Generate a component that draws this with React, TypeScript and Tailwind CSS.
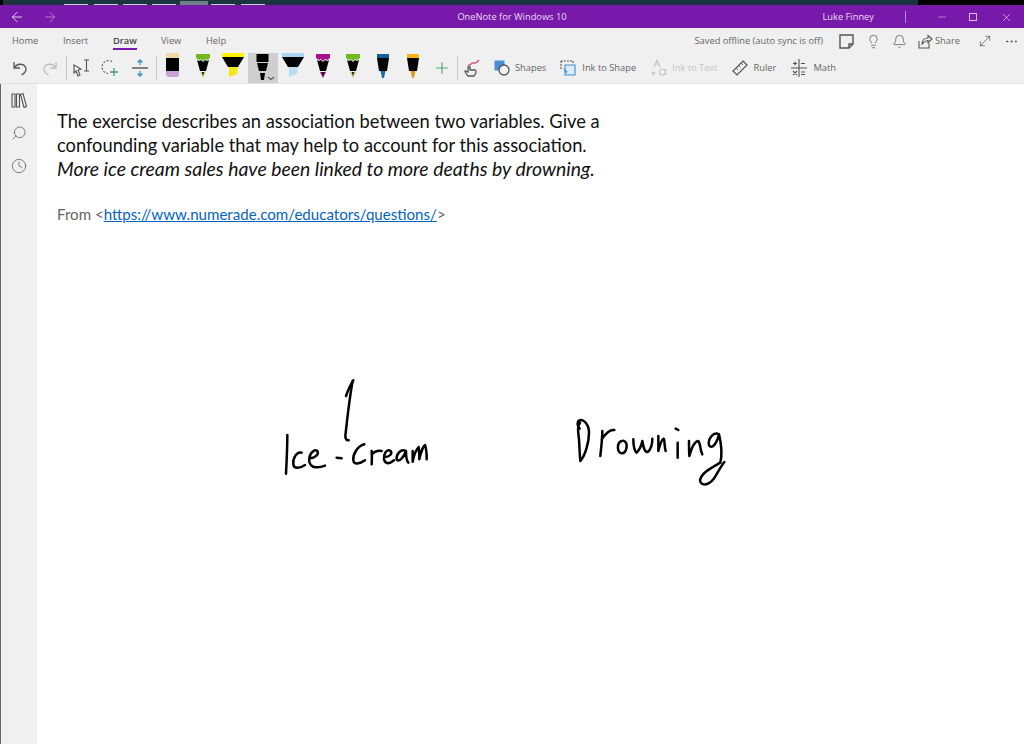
import { ArrowLeft, ArrowRight, Bell, Clock, Lightbulb, Minus, MoreHorizontal, MoveDiagonal, Plus, Search, X } from 'lucide-react';

const ui = "font-['Open_Sans','Noto_Sans',sans-serif]";

// ---- ribbon pens ----
function FeltPen({ top, tip }: { top: string; tip: string }) {
  return (
    <svg width="30" height="31" viewBox="0 1 30 31">
      <path d="M8 2h14v4l-3 2-2-1-2 2-2-2-2 1-3-2z" fill={top} />
      <path d="M9 8l2 1 2-1 2 2 2-2 2 1 2-1-3 11h-6z" fill="#000" />
      <path d="M12 20h6l-3 6z" fill={tip} />
      <path d="M14 20h2l-1 4z" fill="#000" />
    </svg>
  );
}

function BallPen({ top, tip }: { top: string; tip: string }) {
  return (
    <svg width="30" height="31" viewBox="0 1 30 31">
      <path d="M9 2h12v4H9z" fill={top} />
      <path d="M9 6h12l-2 13h-8z" fill="#000" />
      <path d="M12.500 19h5l-1.500 7h-2z" fill={tip} />
    </svg>
  );
}

function Highlighter({ top, tip }: { top: string; tip: string }) {
  return (
    <svg width="30" height="31" viewBox="0 1 30 31">
      <path d="M4 1h22v5H4z" fill={top} />
      <path d="M4 5h22l-6 10H10z" fill="#000" />
      <path d="M11 15h9l-1 7-8 3z" fill={tip} />
    </svg>
  );
}

function PenStrip() {
  return (
    <>
      <div className="w-[30px] h-[30px]">
        <svg width="30" height="31" viewBox="0 1 30 31">
          <path d="M8 1h13v5H8z" fill="#f6d7a8" />
          <path d="M8 6h13v13H8z" fill="#000" />
          <path d="M8 19h13v3q0 3-3 3h-7q-3 0-3-3z" fill="#c9a0d8" />
        </svg>
      </div>
      <div className="w-[30px] h-[30px]"><FeltPen top="#70b81c" tip="#d6d07a" /></div>
      <div className="w-[30px] h-[30px]"><Highlighter top="#fff200" tip="#f5e616" /></div>
      <div className="w-[30px] h-[30px] bg-[#cfcfcf] relative">
        <svg width="30" height="30" viewBox="0 1 30 30">
          <path d="M8.500 2h12v8h-12z" fill="#000" />
          <path d="M9 11h11l-2 8h-7z" fill="#000" />
          <path d="M12 21h5l-1 7h-3z" fill="#000" />
          <path d="M20 25l3 2.500 3-2.500" fill="none" stroke="#555" strokeWidth="1.200" />
        </svg>
      </div>
      <div className="w-[30px] h-[30px]"><Highlighter top="#a9d5f2" tip="#bcdcf3" /></div>
      <div className="w-[30px] h-[30px]"><FeltPen top="#a8108c" tip="#8c1478" /></div>
      <div className="w-[30px] h-[30px]"><FeltPen top="#70b81c" tip="#c2c27a" /></div>
      <div className="w-[30px] h-[30px]"><BallPen top="#0f5c9e" tip="#1a6aa8" /></div>
      <div className="w-[30px] h-[30px]"><BallPen top="#f7b21a" tip="#d9a022" /></div>
    </>
  );
}

// ---- ribbon icons ----
function UndoIcon({ color }: { color: string }) {
  return (
    <svg width="18" height="18" viewBox="0 0 18 18" fill="none" stroke={color} strokeWidth="1.300">
      <path d="M3 3v6h6" />
      <path d="M3.500 8.500C6 4.500 12 4 14.500 8c1.500 3-.5 6-4 8" />
    </svg>
  );
}

function SelectIcon() {
  return (
    <svg width="20" height="20" viewBox="0 0 20 20" fill="none" stroke="#555" strokeWidth="1.100">
      <path d="M3 7l7 4-3 1 2 5-2 1-2-5-2 2z" />
      <path d="M13 2h5M13 13h5M15.500 2v11" />
    </svg>
  );
}

function LassoIcon() {
  return (
    <svg width="20" height="20" viewBox="0 0 20 20" fill="none">
      <path d="M12 3.500A6.500 6.500 0 1 0 8 15.500" stroke="#666" strokeWidth="1.200" strokeDasharray="2 1.600" />
      <path d="M14 10v8M10 14h8" stroke="#3f9e78" strokeWidth="1.300" />
    </svg>
  );
}

function SpaceIcon() {
  return (
    <svg width="18" height="20" viewBox="0 0 18 20" fill="none">
      <path d="M1 10h16" stroke="#666" strokeWidth="1.600" />
      <path d="M9 2v5M6.500 4.500L9 2l2.500 2.500M9 18v-5M6.500 15.500L9 18l2.500-2.500" stroke="#2f8fd0" strokeWidth="1.300" />
    </svg>
  );
}

function TouchIcon() {
  return (
    <svg width="20" height="20" viewBox="0 0 20 20" fill="none">
      <path d="M6 7C9 8 9 4 12 5c2 .6 3-1 5-3" stroke="#c8506a" strokeWidth="1.400" />
      <path d="M6 18c-2-2-3-3-3-5l3 1V9h2v3h5c1 0 1 1 1 2 0 2-1 3-2 4z" stroke="#555" strokeWidth="1.300" />
    </svg>
  );
}

function ShapesIcon() {
  return (
    <svg width="16" height="16" viewBox="0 0 16 16" fill="none">
      <path d="M0.500 0.500h10v10h-10z" fill="#4a8fd0" />
      <circle cx="10" cy="10" r="5" fill="#f0f0f0" stroke="#555" strokeWidth="1.300" />
    </svg>
  );
}

function InkShapeIcon() {
  return (
    <svg width="16" height="16" viewBox="0 0 16 16" fill="none">
      <path d="M1 1h12M1 1v9M13 1v2" stroke="#555" strokeWidth="1.100" strokeDasharray="2 1" />
      <path d="M5 5h10v10H5z" fill="#dcebf7" stroke="#3f8fd0" strokeWidth="1.100" />
      <path d="M3 8l5 4-2 1z" fill="#3f8fd0" />
    </svg>
  );
}

function InkTextIcon() {
  return (
    <svg width="16" height="18" viewBox="0 0 16 18" fill="none" stroke="#c4c4c4" strokeWidth="1.100">
      <path d="M3 8l3-7 3 7M4 5h4" />
      <circle cx="11.500" cy="13" r="3" />
      <path d="M14.500 10v6M1 13l3 3M1 16l3-3" />
    </svg>
  );
}

function RulerIcon() {
  return (
    <svg width="16" height="16" viewBox="0 0 16 16" fill="none" stroke="#555" strokeWidth="1.200">
      <path d="M11 1l4 4L5 15l-4-4z" />
      <path d="M4 8l2 2M6.500 5.500l2 2M9 3l2 2" strokeWidth="0.900" />
    </svg>
  );
}

function MathIcon() {
  return (
    <svg width="16" height="18" viewBox="0 0 16 18" fill="none" stroke="#555" strokeWidth="1.100">
      <path d="M0 9h16M8 0v18" />
      <path d="M2 4.500h4M4 2.500v4M10 4.500h4M2 12l4 4M6 12l-4 4M10 13h4M10 15.500h4" />
    </svg>
  );
}

function NoteIcon() {
  return (
    <svg width="15" height="15" viewBox="0 0 15 15" fill="none" stroke="#555" strokeWidth="1.400">
      <path d="M1 1h13v9l-4 4H1z" />
      <path d="M14 10h-4v4" />
    </svg>
  );
}

function ShareIcon() {
  return (
    <svg width="15" height="15" viewBox="0 0 15 15" fill="none" stroke="#555" strokeWidth="1.100">
      <path d="M1 7v7h10V9" />
      <path d="M4 10c0-4 3-6 6-6V1.500L14 5l-4 3.500V6.500C8 6.500 6 8 4 10z" />
    </svg>
  );
}

// ---- ink ----
function Ink({ d, className, w, h }: { d: string[]; className: string; w: number; h: number }) {
  return (
    <svg className={className} width={w / 3} height={h / 3} viewBox={`0 0 ${w} ${h}`} fill="none" stroke="#000" strokeWidth="7.500" strokeLinecap="round" strokeLinejoin="round">
      {d.map((p) => <path key={p} d={p} />)}
    </svg>
  );
}

const iceCream = [
  'M52 192C52 230 50 270 48 308',
  'M95 245C80 240 68 262 70 280C72 295 90 292 105 282',
  'M118 262C135 262 148 250 142 240C132 232 115 250 118 272C122 292 145 292 165 284',
  'M200 260L215 262',
  'M283 220C262 225 248 250 250 268C252 282 268 280 285 268',
  'M305 240C306 255 306 268 305 280M305 250C315 240 325 238 335 240',
  'M345 258C358 258 368 248 362 240C350 232 340 250 342 265C346 282 360 278 372 268',
  'M408 240C392 232 378 250 380 265C385 275 400 262 408 240C408 255 408 268 415 275',
  'M428 240C428 250 428 260 428 272C432 250 440 235 446 228C448 240 448 255 448 265C452 245 460 225 465 222C470 235 470 250 470 265',
  'M248 30C240 70 232 140 226 195C226 205 232 208 236 208',
  'M228 75C235 55 242 40 250 28',
];

const drowning = [
  'M45 50C38 60 38 70 42 100C44 130 44 150 46 165C60 150 72 110 72 80C72 55 55 35 40 45C36 52 38 62 44 68',
  'M112 75C112 100 108 130 106 150M110 100C120 85 135 70 148 72',
  'M170 105C155 110 155 140 170 142C185 142 192 110 175 104',
  'M205 100C205 120 208 135 215 140C225 130 230 115 232 105C235 125 240 140 248 138C258 130 262 110 262 98',
  'M280 90C280 105 280 120 280 135C285 115 290 100 296 98C300 105 298 125 302 135',
  'M338 110L338 155M332 68L340 72',
  'M372 105C372 120 372 135 373 150C380 125 390 105 400 105C408 115 405 135 412 145',
  'M462 85C445 75 428 100 432 118C440 130 455 115 462 85C468 110 472 145 466 170C440 185 410 200 405 222C405 240 430 240 445 220C455 205 465 185 478 168',
];

export default function App() {
  return (
    <div className={`${ui} w-[1024px] h-[744px] overflow-hidden flex flex-col bg-white`}>
      {/* desktop strip behind the window */}
      <div className="h-[5px] bg-[#1c3340] flex items-end shrink-0">
        <div className="w-[3px] h-[5px] bg-black" />
        <div className="w-[61px]" />
        <div className="w-[24px] h-[1px] bg-[#c5ced8]" />
        <div className="w-[6px]" />
        <div className="w-[24px] h-[1px] bg-[#c5ced8]" />
        <div className="w-[5px]" />
        <div className="w-[24px] h-[1px] bg-[#c5ced8]" />
        <div className="w-[5px]" />
        <div className="w-[24px] h-[1px] bg-[#c5ced8]" />
        <div className="w-[4px]" />
        <div className="w-[28px] h-[4px] bg-[#6f8088]" />
        <div className="w-[3px]" />
        <div className="w-[24px] h-[1px] bg-[#c5ced8]" />
        <div className="w-[6px]" />
        <div className="w-[24px] h-[1px] bg-[#c5ced8]" />
        <div className="flex-1" />
        <div className="w-[106px] h-[5px] bg-black" />
      </div>

      {/* title bar */}
      <div className="h-[23px] pt-[1px] bg-[#7719aa] text-white grid grid-cols-[1fr_auto_1fr] items-center shrink-0">
        <div className="flex items-center pl-[9px] gap-[17px]">
          <ArrowLeft size={16} strokeWidth={1.3} className="text-[#f4e8f9]" />
          <ArrowRight size={16} strokeWidth={1.3} className="text-[#b98ad2]" />
        </div>
        <div className="text-[9.300px] text-[#ecdcf4]">OneNote for Windows 10</div>
        <div className="flex items-center justify-end text-[#ecdcf4]">
          <span className="text-[9.300px]">Luke Finney</span>
          <div className="w-[1px] h-[12px] bg-[#b98ad2] ml-[31px]" />
          <Minus size={12} strokeWidth={1.2} className="ml-[30px] text-[#d8bde6]" />
          <div className="w-[8px] h-[8px] border border-[#d8bde6] ml-[21px]" />
          <X size={13} strokeWidth={1.2} className="ml-[23px] mr-[11px]" />
        </div>
      </div>

      {/* ribbon */}
      <div className="h-[56px] bg-[#f0f0f0] border-b border-[#e2e2e2] flex flex-col shrink-0 text-[#666]">
        <div className="h-[25px] pt-[1px] flex items-center text-[9.300px] relative">
          <span className="ml-[12px] w-[51px]">Home</span>
          <span className="w-[50px]">Insert</span>
          <span className="w-[48px] font-semibold text-[#444] relative">
            Draw
            <span className="absolute left-0 top-[14px] w-[24px] h-[2px] bg-[#7719aa]" />
          </span>
          <span className="w-[45px]">View</span>
          <span>Help</span>
          <div className="flex-1" />
          <span className="whitespace-nowrap">Saved offline (auto sync is off)</span>
          <div className="ml-[16px] w-[14px]"><NoteIcon /></div>
          <Lightbulb size={15} strokeWidth={1.2} className="ml-[13px] text-[#555]" />
          <Bell size={15} strokeWidth={1.2} className="ml-[11px] text-[#555]" />
          <div className="ml-[11px] w-[15px]"><ShareIcon /></div>
          <span className="ml-[2px]">Share</span>
          <MoveDiagonal size={16} strokeWidth={1.1} className="ml-[17px] text-[#555]" />
          <MoreHorizontal size={15} strokeWidth={1.6} className="ml-[11px] mr-[5px] text-[#555]" />
        </div>
        <div className="h-[30px] flex items-start">
          <div className="w-[4px]" />
          <div className="w-[31px] h-[30px] flex items-center justify-center"><UndoIcon color="#555" /></div>
          <div className="w-[31px] h-[30px] flex items-center justify-center -scale-x-100"><UndoIcon color="#bdbdbd" /></div>
          <div className="w-[1px] h-[24px] mt-[3px] bg-[#c9c9c9]" />
          <div className="w-[28px] h-[30px] flex items-center justify-center"><SelectIcon /></div>
          <div className="w-[30px] h-[30px] flex items-center justify-center"><LassoIcon /></div>
          <div className="w-[30px] h-[30px] flex items-center justify-center"><SpaceIcon /></div>
          <div className="w-[1px]" />
          <div className="w-[1px] h-[24px] mt-[3px] bg-[#c9c9c9]" />
          <div className="w-[1px]" />
          <PenStrip />
          <div className="w-[27px] h-[30px] flex items-center justify-center">
            <Plus size={18} strokeWidth={1.5} className="text-[#4aa57e]" />
          </div>
          <div className="w-[2px]" />
          <div className="w-[1px] h-[24px] mt-[3px] bg-[#c9c9c9]" />
          <div className="w-[28px] h-[30px] flex items-center justify-center"><TouchIcon /></div>
          <div className="ml-[8px] h-[30px] flex items-center gap-[5px] text-[9.300px]"><ShapesIcon /><span>Shapes</span></div>
          <div className="ml-[14px] h-[30px] flex items-center gap-[6px] text-[9.300px]"><InkShapeIcon /><span>Ink to Shape</span></div>
          <div className="ml-[15px] h-[30px] flex items-center gap-[5px] text-[9.300px] text-[#c4c4c4]"><InkTextIcon /><span>Ink to Text</span></div>
          <div className="ml-[14px] h-[30px] flex items-center gap-[6px] text-[9.300px]"><RulerIcon /><span>Ruler</span></div>
          <div className="ml-[15px] h-[30px] flex items-center gap-[6px] text-[9.300px]"><MathIcon /><span>Math</span></div>
        </div>
      </div>

      <div className="flex-1 flex min-h-0">
        {/* left rail */}
        <div className="w-[37px] bg-[#f0f0f0] border-l border-[#666] flex flex-col items-center pt-[8px] gap-[17px] text-[#555] shrink-0">
          <svg width="16" height="16" viewBox="0 0 16 16" fill="none" stroke="#555" strokeWidth="1.100">
            <path d="M1 2h3v13H1zM5.500 2h3v13h-3zM9.500 2.500l2.500-1 3.500 13-2.500 1z" />
          </svg>
          <Search size={16} strokeWidth={1.1} className="-scale-x-100" />
          <Clock size={16} strokeWidth={1.1} />
        </div>

        {/* page canvas */}
        <div className="flex-1 relative pl-[20px] pt-[25px] font-['Lato','Carlito',sans-serif]">
          <div className="text-[18.300px] leading-[24px] text-[#111] whitespace-nowrap">
            <div>The exercise describes an association between two variables. Give a</div>
            <div>confounding variable that may help to account for this association.</div>
            <div className="italic text-[19.400px]">More ice cream sales have been linked to more deaths by drowning.</div>
          </div>
          <div className="mt-[21px] text-[15.100px] leading-[24px] text-[#666] whitespace-nowrap">
            From &lt;<a href="#" className="text-[#0563c1] underline">https://www.numerade.com/educators/questions/</a>&gt;
          </div>
          <Ink d={iceCream} w={510} h={330} className="absolute left-[233px] top-[287px]" />
          <Ink d={drowning} w={510} h={240} className="absolute left-[528px] top-[322px]" />
        </div>
      </div>
    </div>
  );
}
